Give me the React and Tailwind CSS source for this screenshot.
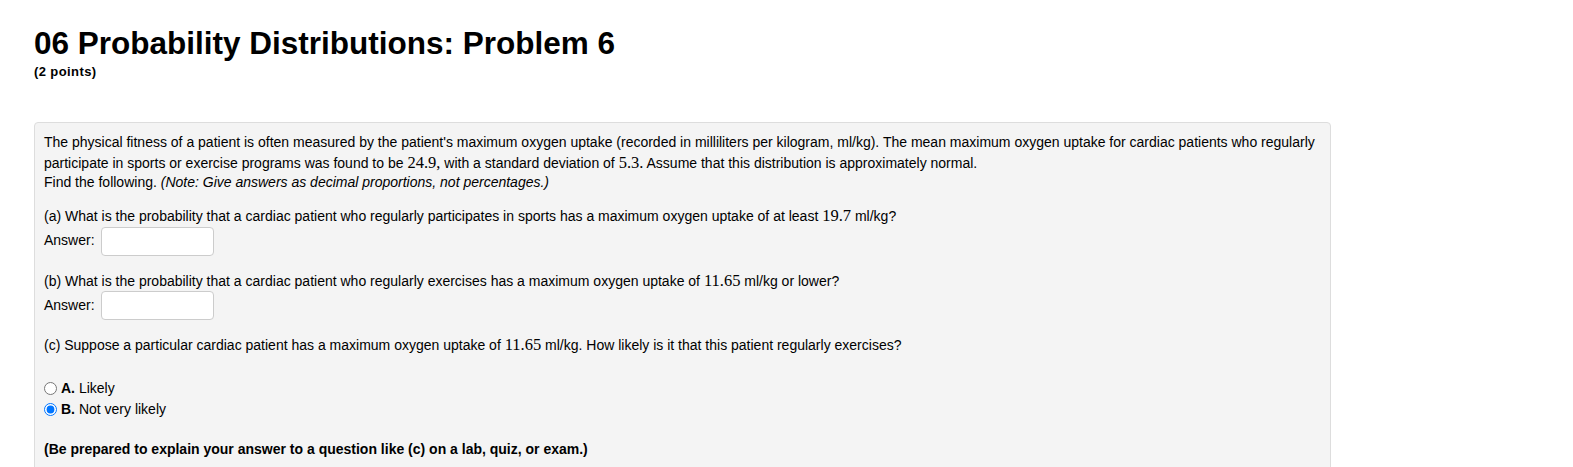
import React from "react";

// math values are rendered in a serif face, like MathJax output
function M({ children }) {
  return <span className="font-['Liberation_Serif',serif] text-[16.5px]">{children}</span>;
}

function AnswerRow() {
  return (
    <div className="flex items-center h-[29px]">
      <span className="mr-[6px]">Answer:</span>
      <input type="text" className="w-[113px] h-[29px] bg-white border border-[#ccc] rounded-[4px] px-2 outline-none" />
    </div>
  );
}

export default function App() {
  return (
    <div className="min-h-screen bg-white text-black font-['Liberation_Sans',Arial,sans-serif] pl-[34px] pr-[242px]">
      <h1 className="pt-[24px] text-[31.5px] leading-[38px] font-bold">06 Probability Distributions: Problem 6</h1>
      <div className="text-[13px] tracking-[0.4px] font-bold leading-[16px] mt-[2px]">(2 points)</div>

      <div className="mt-[42px] bg-[#f4f4f4] border border-[#dddddd] rounded-[4px] pl-[9px] pr-3 pt-[10px] pb-4 text-[14px] leading-[19.5px]">
        <div>
          The physical fitness of a patient is often measured by the patient's maximum oxygen uptake (recorded in milliliters per kilogram, ml/kg). The mean maximum oxygen uptake for cardiac patients who regularly participate in sports or exercise programs was found to be <M>24.9,</M> with a standard deviation of <M>5.3.</M> Assume that this distribution is approximately normal.
          <br />
          Find the following. <i>(Note: Give answers as decimal proportions, not percentages.)</i>
        </div>

        <div className="mt-[13.5px]">
          (a) What is the probability that a cardiac patient who regularly participates in sports has a maximum oxygen uptake of at least <M>19.7</M> ml/kg?
        </div>
        <AnswerRow />

        <div className="mt-[15px]">
          (b) What is the probability that a cardiac patient who regularly exercises has a maximum oxygen uptake of <M>11.65</M> ml/kg or lower?
        </div>
        <AnswerRow />

        <div className="mt-[15px]">
          (c) Suppose a particular cardiac patient has a maximum oxygen uptake of <M>11.65</M> ml/kg. How likely is it that this patient regularly exercises?
        </div>

        <div className="mt-[22.5px]">
          <label className="flex items-center h-[21px]">
            <input type="radio" name="c" className="m-0 mr-[4px] w-[13px] h-[13px]" />
            <b>A.</b>&nbsp;Likely
          </label>
          <label className="flex items-center h-[21px]">
            <input type="radio" name="c" defaultChecked className="m-0 mr-[4px] w-[13px] h-[13px]" />
            <b>B.</b>&nbsp;Not very likely
          </label>
        </div>

        <div className="mt-[19.5px] font-bold">
          (Be prepared to explain your answer to a question like (c) on a lab, quiz, or exam.)
        </div>
      </div>
    </div>
  );
}
